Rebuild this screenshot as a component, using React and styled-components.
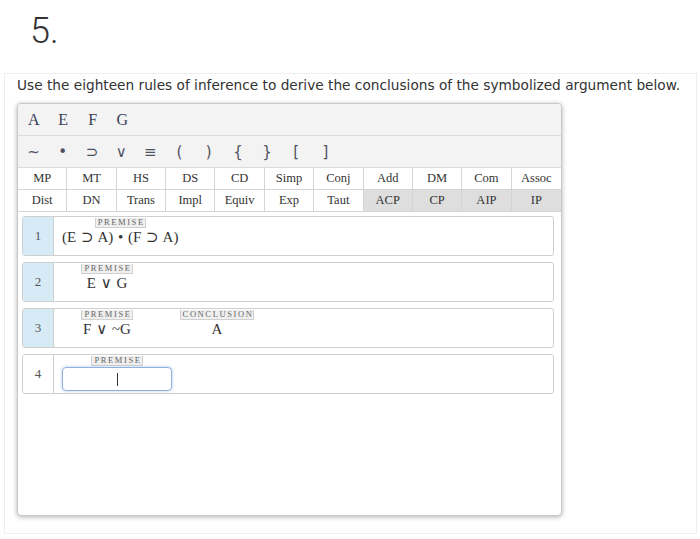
import React from "react";
import styled, { createGlobalStyle } from "styled-components";

const GlobalStyle = createGlobalStyle`
  html, body { margin: 0; padding: 0; background: #fff; }
  body { width: 700px; height: 539px; overflow: hidden; }
`;

const Page = styled.div`
  padding: 11px 3px 0 4px;
`;

const Number = styled.div`
  font-family: Roboto, "Liberation Sans", sans-serif;
  font-weight: 300;
  font-size: 36px;
  line-height: 40px;
  color: #333;
  margin-left: 26px;
  height: 62px;
`;

const Card = styled.div`
  border: 1px solid #eee;
  height: 459px;
  padding: 0 0 0 12px;
`;

const Instruction = styled.p`
  margin: 0;
  padding-top: 2px;
  font-family: "DejaVu Sans", Verdana, sans-serif;
  font-size: 13.7px;
  line-height: 18px;
  color: #333;
  height: 27px;
  white-space: nowrap;
`;

const Panel = styled.div`
  width: 543px;
  height: 411px;
  border: 1px solid #c8c8c8;
  border-radius: 4px;
  box-shadow: 0 1px 5px rgba(0, 0, 0, 0.3);
  background: #fff;
  overflow: hidden;
  display: flex;
  flex-direction: column;
`;

const Bar = styled.div`
  display: flex;
  align-items: center;
  height: 31px;
  padding-left: ${(p) => p.$pad}px;
  background: #f3f3f3;
  border-bottom: 1px solid #dcdcdc;
  font-family: ${(p) => p.$font};
  color: ${(p) => p.$color};
  font-size: ${(p) => p.$size}px;
`;

const Key = styled.span`
  width: ${(p) => p.$w}px;
  text-align: center;
`;

const RuleGrid = styled.div`
  display: grid;
  grid-template-columns: repeat(11, 1fr);
`;

const Rule = styled.div`
  height: 21px;
  line-height: 21px;
  text-align: center;
  font-family: "Liberation Serif", "DejaVu Serif", serif;
  font-size: 12.5px;
  color: #333;
  background: ${(p) => (p.$shaded ? "#dedede" : "#fff")};
  border-right: ${(p) => (p.$last ? "none" : "1px solid #d4d4d4")};
  border-bottom: 1px solid #d4d4d4;
`;

const Lines = styled.div`
  display: flex;
  flex-direction: column;
  gap: 6px;
  padding: 4px 7px 0 4px;
`;

const Line = styled.div`
  display: flex;
  height: 38px;
  border: 1px solid #cfcfcf;
  border-radius: 3px;
  overflow: hidden;
`;

const LineNo = styled.div`
  width: 30px;
  flex: none;
  display: flex;
  align-items: center;
  justify-content: center;
  background: ${(p) => (p.$given ? "#d7ebf7" : "#fff")};
  border-right: 1px solid #cfcfcf;
  font-family: "Liberation Serif", "DejaVu Serif", serif;
  font-size: 13px;
  color: #555;
`;

const LineBody = styled.div`
  display: flex;
  gap: 20px;
  padding-left: 8px;
`;

const Cell = styled.div`
  display: flex;
  flex-direction: column;
  align-items: center;
  min-width: ${(p) => p.$min || 90}px;
`;

const Tag = styled.span`
  margin-top: 1px;
  font-family: "Liberation Serif", "DejaVu Serif", serif;
  font-size: 8.5px;
  line-height: 9px;
  letter-spacing: 1.6px;
  padding: 0 0 0 2px;
  color: #666;
  background: #efefef;
  border: 1px solid #d0d0d0;
  border-top: none;
`;

const Formula = styled.span`
  font-family: "Liberation Serif", "DejaVu Serif", serif;
  font-size: 15px;
  line-height: 18px;
  color: #333;
  word-spacing: 1px;
`;

const EntryBox = styled.div`
  margin-top: 1px;
  width: 108px;
  height: 22px;
  border: 1px solid #8fb0dc;
  border-radius: 4px;
  box-shadow: 0 0 3px rgba(90, 140, 220, 0.5);
  display: flex;
  align-items: center;
  justify-content: center;
`;

const Caret = styled.span`
  width: 1px;
  height: 13px;
  background: #333;
`;

const letters = ["A", "E", "F", "G"];
const symbols = ["~", "•", "⊃", "∨", "≡", "(", ")", "{", "}", "[", "]"];
const rules1 = ["MP", "MT", "HS", "DS", "CD", "Simp", "Conj", "Add", "DM", "Com", "Assoc"];
const rules2 = ["Dist", "DN", "Trans", "Impl", "Equiv", "Exp", "Taut", "ACP", "CP", "AIP", "IP"];
const shaded = new Set(["ACP", "CP", "AIP", "IP"]);

const lines = [
  { n: 1, cells: [{ tag: "PREMISE", f: "(E ⊃ A) • (F ⊃ A)" }] },
  { n: 2, cells: [{ tag: "PREMISE", f: "E ∨ G" }] },
  {
    n: 3,
    cells: [
      { tag: "PREMISE", f: "F ∨ ~G" },
      { tag: "CONCLUSION", f: "A" },
    ],
  },
];

const serif = `"Liberation Serif", "DejaVu Serif", serif`;
const sans = `"DejaVu Sans", "Liberation Sans", sans-serif`;

export default function App() {
  return (
    <>
      <GlobalStyle />
      <Page>
        <Number>5.</Number>
        <Card>
          <Instruction>
            Use the eighteen rules of inference to derive the conclusions of the symbolized argument below.
          </Instruction>
          <Panel>
            <Bar $pad={1} $color="#3a3f5a" $size={16} $font={serif}>
              {letters.map((l) => (
                <Key key={l} $w={29.5}>{l}</Key>
              ))}
            </Bar>
            <Bar $pad={1} $color="#4f5160" $size={15} $font={sans}>
              {symbols.map((s, i) => (
                <Key key={i} $w={29.2}>{s}</Key>
              ))}
            </Bar>
            <RuleGrid>
              {rules1.map((r, i) => (
                <Rule key={r} $last={i === 10}>{r}</Rule>
              ))}
              {rules2.map((r, i) => (
                <Rule key={r} $last={i === 10} $shaded={shaded.has(r)}>
                  {r}
                </Rule>
              ))}
            </RuleGrid>
            <Lines>
              {lines.map((ln) => (
                <Line key={ln.n}>
                  <LineNo $given>{ln.n}</LineNo>
                  <LineBody>
                    {ln.cells.map((c) => (
                      <Cell key={c.tag}>
                        <Tag>{c.tag}</Tag>
                        <Formula>{c.f}</Formula>
                      </Cell>
                    ))}
                  </LineBody>
                </Line>
              ))}
              <Line>
                <LineNo>4</LineNo>
                <LineBody>
                  <Cell $min={110}>
                    <Tag>PREMISE</Tag>
                    <EntryBox>
                      <Caret />
                    </EntryBox>
                  </Cell>
                </LineBody>
              </Line>
            </Lines>
          </Panel>
        </Card>
      </Page>
    </>
  );
}
